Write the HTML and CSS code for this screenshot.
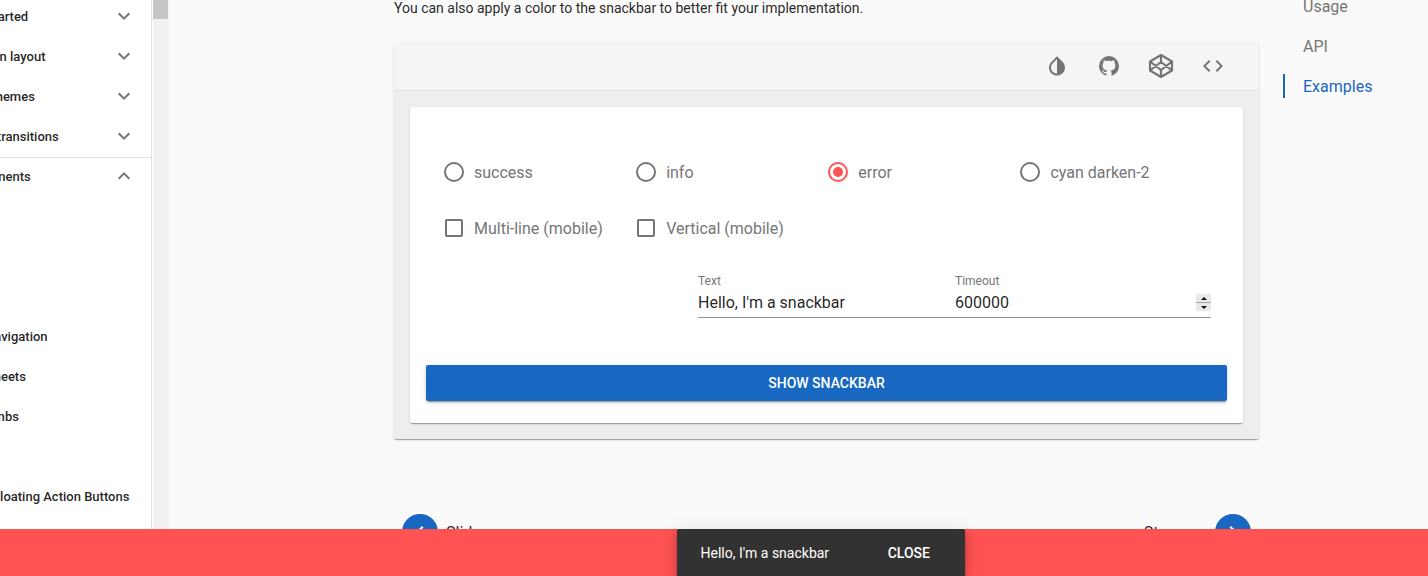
FILE: index.html
```html
<!DOCTYPE html>
<html lang="en">
<head>
<meta charset="utf-8">
<title>Snackbars</title>
<link rel="stylesheet" href="styles.css">
</head>
<body>
<div class="app">
  <nav class="sidebar">
    <ul class="nav-list">
      <li class="nav-row"><span class="nav-label">Getting started</span><svg class="chev" viewBox="0 0 24 24"><path d="M7.41,8.58L12,13.17L16.59,8.58L18,10L12,16L6,10L7.41,8.58Z"/></svg></li>
      <li class="nav-row"><span class="nav-label">Application layout</span><svg class="chev" viewBox="0 0 24 24"><path d="M7.41,8.58L12,13.17L16.59,8.58L18,10L12,16L6,10L7.41,8.58Z"/></svg></li>
      <li class="nav-row"><span class="nav-label">Styles &amp; themes</span><svg class="chev" viewBox="0 0 24 24"><path d="M7.41,8.58L12,13.17L16.59,8.58L18,10L12,16L6,10L7.41,8.58Z"/></svg></li>
      <li class="nav-row"><span class="nav-label">Motion &amp; transitions</span><svg class="chev" viewBox="0 0 24 24"><path d="M7.41,8.58L12,13.17L16.59,8.58L18,10L12,16L6,10L7.41,8.58Z"/></svg></li>
      <li class="nav-row nav-row-divided"><span class="nav-label">UI Components</span><svg class="chev" viewBox="0 0 24 24"><path d="M7.41,15.41L12,10.83L16.59,15.41L18,14L12,8L6,14L7.41,15.41Z"/></svg></li>
      <li class="nav-row"><span class="nav-label">Alerts</span></li>
      <li class="nav-row"><span class="nav-label">Avatars</span></li>
      <li class="nav-row"><span class="nav-label">Badges</span></li>
      <li class="nav-row"><span class="nav-label">Bottom navigation</span></li>
      <li class="nav-row"><span class="nav-label">Bottom sheets</span></li>
      <li class="nav-row"><span class="nav-label">Breadcrumbs</span></li>
      <li class="nav-row"><span class="nav-label">Buttons</span></li>
      <li class="nav-row"><span class="nav-label">Buttons: Floating Action Buttons</span></li>
      <li class="nav-row"><span class="nav-label">Cards</span></li>
    </ul>
  </nav>
  <div class="scrollbar"><div class="scroll-thumb"></div></div>
  <main class="main">
    <p class="intro">You can also apply a color to the snackbar to better fit your implementation.</p>
    <section class="example">
      <header class="toolbar">
        <svg class="tool-icon" viewBox="0 0 24 24"><path d="M12,19.58V19.58C10.4,19.58 8.89,18.96 7.76,17.83C6.62,16.69 6,15.19 6,13.58C6,12 6.62,10.47 7.76,9.34L12,5.1M17.66,7.93L12,2.27V2.27L6.34,7.93C3.22,11.05 3.22,16.12 6.34,19.24C7.9,20.8 9.95,21.58 12,21.58C14.05,21.58 16.1,20.8 17.66,19.24C20.78,16.12 20.78,11.05 17.66,7.93Z"/></svg>
        <svg class="tool-icon" viewBox="0 0 24 24"><path d="M12,2A10,10 0 0,0 2,12C2,16.42 4.87,20.17 8.84,21.5C9.34,21.58 9.5,21.27 9.5,21C9.5,20.77 9.5,20.14 9.5,19.31C6.73,19.91 6.14,17.97 6.14,17.97C5.68,16.81 5.03,16.5 5.03,16.5C4.12,15.88 5.1,15.9 5.1,15.9C6.1,15.97 6.63,16.93 6.63,16.93C7.5,18.45 8.97,18 9.54,17.76C9.63,17.11 9.89,16.67 10.17,16.42C7.95,16.17 5.62,15.31 5.62,11.5C5.62,10.39 6,9.5 6.65,8.79C6.55,8.54 6.2,7.5 6.75,6.15C6.75,6.15 7.59,5.88 9.5,7.17C10.29,6.95 11.15,6.84 12,6.84C12.85,6.84 13.71,6.95 14.5,7.17C16.41,5.88 17.25,6.15 17.25,6.15C17.8,7.5 17.45,8.54 17.35,8.79C18,9.5 18.38,10.39 18.38,11.5C18.38,15.32 16.04,16.16 13.81,16.41C14.17,16.72 14.5,17.33 14.5,18.26C14.5,19.6 14.5,20.68 14.5,21C14.5,21.27 14.66,21.59 15.17,21.5C19.14,20.16 22,16.42 22,12A10,10 0 0,0 12,2Z"/></svg>
        <svg class="tool-icon tool-icon-stroke" viewBox="0 0 24 24"><path d="M12,1L23,7.5V16.5L12,23L1,16.5V7.5Z M12,1V8 M12,16V23 M1,7.5L12,16L23,7.5 M1,16.5L12,8L23,16.5"/></svg>
        <svg class="tool-icon" viewBox="0 0 24 24"><path d="M14.6,16.6L19.2,12L14.6,7.4L16,6L22,12L16,18L14.6,16.6M9.4,16.6L4.8,12L9.4,7.4L8,6L2,12L8,18L9.4,16.6Z"/></svg>
      </header>
      <div class="example-body">
        <form class="panel">
          <div class="option-grid">
            <label class="option"><svg class="ctl" viewBox="0 0 24 24"><circle cx="12" cy="12" r="9" class="ctl-ring"/></svg>success</label>
            <label class="option"><svg class="ctl" viewBox="0 0 24 24"><circle cx="12" cy="12" r="9" class="ctl-ring"/></svg>info</label>
            <label class="option"><svg class="ctl ctl-on" viewBox="0 0 24 24"><circle cx="12" cy="12" r="9" class="ctl-ring"/><circle cx="12" cy="12" r="5"/></svg>error</label>
            <label class="option"><svg class="ctl" viewBox="0 0 24 24"><circle cx="12" cy="12" r="9" class="ctl-ring"/></svg>cyan darken-2</label>
            <label class="option"><svg class="ctl" viewBox="0 0 24 24"><path d="M19,3H5C3.89,3 3,3.89 3,5V19A2,2 0 0,0 5,21H19A2,2 0 0,0 21,19V5C21,3.89 20.1,3 19,3M19,5V19H5V5H19Z"/></svg>Multi-line (mobile)</label>
            <label class="option"><svg class="ctl" viewBox="0 0 24 24"><path d="M19,3H5C3.89,3 3,3.89 3,5V19A2,2 0 0,0 5,21H19A2,2 0 0,0 21,19V5C21,3.89 20.1,3 19,3M19,5V19H5V5H19Z"/></svg>Vertical (mobile)</label>
          </div>
          <div class="fields">
            <label class="field field-text"><span class="field-label">Text</span><input class="field-input" type="text" value="Hello, I'm a snackbar"></label>
            <label class="field field-num"><span class="field-label">Timeout</span><input class="field-input" type="number" value="600000"><span class="spin" aria-hidden="true"><span class="spin-btn"><span class="spin-up"></span></span><span class="spin-btn"><span class="spin-down"></span></span></span></label>
          </div>
          <button class="show-btn" type="button">Show Snackbar</button>
        </form>
      </div>
    </section>
    <div class="pager">
      <a class="pager-link"><span class="pager-dot"><svg viewBox="0 0 24 24"><path d="M15.41,16.58L10.83,12L15.41,7.41L14,6L8,12L14,18L15.41,16.58Z"/></svg></span>Sliders</a>
      <a class="pager-link">Steppers<span class="pager-dot"><svg viewBox="0 0 24 24"><path d="M8.59,16.58L13.17,12L8.59,7.41L10,6L16,12L10,18L8.59,16.58Z"/></svg></span></a>
    </div>
  </main>
  <aside class="toc">
    <a class="toc-item">Usage</a>
    <a class="toc-item">API</a>
    <a class="toc-item toc-active">Examples</a>
  </aside>
</div>
<div class="snack-bar">
  <div class="snack">
    <span class="snack-text">Hello, I'm a snackbar</span>
    <button class="snack-close" type="button">Close</button>
  </div>
</div>
</body>
</html>
```

FILE: styles.css
```css
* { box-sizing: border-box; }
html, body { margin: 0; height: 100%; overflow: hidden; }
body {
  font-family: Roboto, "Liberation Sans", sans-serif;
  background: #fafafa;
  color: rgba(0, 0, 0, .87);
}
.app { display: flex; height: 576px; overflow: hidden; }

/* sidebar */
.sidebar {
  flex: 0 0 152px;
  background: #fff;
  border-right: 1px solid #e0e0e0;
  overflow: hidden;
}
.nav-list { list-style: none; margin: -4px 0 0; padding: 0; }
.nav-row {
  display: flex;
  align-items: center;
  justify-content: space-between;
  height: 40px;
  margin-left: -59px;
  padding-right: 15px;
  font-size: 13px;
  font-weight: 500;
  white-space: nowrap;
}
.nav-row-divided { position: relative; }
.nav-row-divided::before {
  content: "";
  position: absolute;
  left: 0;
  right: 0;
  top: 1px;
  border-top: 1px solid #e0e0e0;
}
.chev { width: 24px; height: 24px; fill: #757575; flex: none; }

/* page scrollbar */
.scrollbar { flex: 0 0 17px; background: #f1f1f1; padding: 0 1px; border-left: 1px solid #fff; }
.scroll-thumb { height: 19px; margin-left: -1px; margin-right: 0; background: #c6c6c6; }

/* main column */
.main { flex: 0 0 1090px; padding: 0 0 0 225px; }
.intro { margin: -2px 0 0; font-size: 14px; line-height: 20px; width: 865px; }
.example {
  width: 865px;
  margin-top: 24px;
  border-radius: 2px;
  box-shadow: 0 2px 1px -1px rgba(0,0,0,.2), 0 1px 1px 0 rgba(0,0,0,.14), 0 1px 3px 0 rgba(0,0,0,.12);
}
.toolbar {
  display: flex;
  justify-content: flex-end;
  align-items: center;
  gap: 28px;
  height: 49px;
  padding-right: 34px;
  background: #f5f5f5;
  border-bottom: 1px solid #e0e0e0;
  border-radius: 2px 2px 0 0;
}
.tool-icon { width: 24px; height: 24px; fill: #757575; flex: none; overflow: visible; }
.tool-icon-stroke { fill: none; stroke: #757575; stroke-width: 2.2; stroke-linejoin: round; }
.example-body { background: #eee; padding: 16px; }
.panel {
  background: #fff;
  border-radius: 2px;
  padding: 53px 16px 22px;
  box-shadow: 0 2px 1px -1px rgba(0,0,0,.2), 0 1px 1px 0 rgba(0,0,0,.14), 0 1px 3px 0 rgba(0,0,0,.12);
}
.option-grid {
  display: grid;
  grid-template-columns: repeat(4, 192.15px);
  row-gap: 32px;
  margin-left: 16px;
}
.option {
  display: flex;
  align-items: center;
  gap: 8px;
  height: 24px;
  font-size: 16px;
  color: #757575;
  white-space: nowrap;
}
.ctl { width: 24px; height: 24px; fill: #757575; flex: none; }
.ctl-ring { fill: none; stroke: #757575; stroke-width: 2; }
.ctl-on { fill: #ff5252; }
.ctl-on .ctl-ring { stroke: #ff5252; }

.fields { display: flex; margin: 34px 0 0 272px; }
.field { display: flex; flex-direction: column; position: relative; }
.field-text { width: 257px; }
.field-num { width: 256px; }
.field-label { font-size: 12px; line-height: 14px; color: #757575; }
.field-input {
  height: 30px;
  padding: 6px 0;
  border: 0;
  border-bottom: 1px solid #949494;
  outline: 0;
  background: transparent;
  font: 16px/17px Roboto, "Liberation Sans", sans-serif;
  color: rgba(0, 0, 0, .87);
}
.field-input::-webkit-inner-spin-button { display: none; }
.spin {
  position: absolute;
  right: 0;
  top: 20px;
  display: flex;
  flex-direction: column;
  width: 15px;
  height: 17px;
  gap: 1px;
  background: #a8a8a8;
}
.spin-btn {
  flex: 1;
  display: flex;
  align-items: center;
  justify-content: center;
  background: #e9e9e9;
}
.spin-up, .spin-down {
  width: 0;
  height: 0;
  border-left: 3.5px solid transparent;
  border-right: 3.5px solid transparent;
}
.spin-up { border-bottom: 3px solid #111; }
.spin-down { border-top: 3px solid #111; }

.show-btn {
  display: block;
  width: 100%;
  height: 36px;
  margin-top: 47px;
  border: 0;
  border-radius: 2px;
  background: #1867c0;
  color: #fff;
  font: 500 14px Roboto, "Liberation Sans", sans-serif;
  text-transform: uppercase;
  box-shadow: 0 3px 1px -2px rgba(0,0,0,.2), 0 2px 2px 0 rgba(0,0,0,.14), 0 1px 5px 0 rgba(0,0,0,.12);
}

/* prev/next */
.pager {
  display: flex;
  justify-content: space-between;
  width: 865px;
  margin-top: 75px;
  padding: 0 8px;
}
.pager-link { display: flex; align-items: center; gap: 8px; font-size: 16px; }
.pager-dot {
  display: flex;
  align-items: center;
  justify-content: center;
  width: 36px;
  height: 36px;
  border-radius: 50%;
  background: #1867c0;
}
.pager-dot svg { width: 24px; height: 24px; fill: #fff; }

/* toc */
.toc { display: flex; flex-direction: column; margin: -14px 0 0 24px; }
.toc-item {
  display: flex;
  align-items: center;
  height: 40px;
  padding-left: 20px;
  font-size: 16px;
  color: #757575;
}
.toc-active { position: relative; color: #1867c0; }
.toc-active::before {
  content: "";
  position: absolute;
  left: 0;
  top: 8px;
  bottom: 8px;
  width: 2px;
  background: #1867c0;
}

/* snackbar */
.snack-bar {
  position: fixed;
  left: 0;
  right: 0;
  bottom: 0;
  height: 47px;
  padding-left: 214px;
  display: flex;
  justify-content: center;
  background: #ff5252;
}
.snack {
  display: flex;
  align-items: center;
  justify-content: space-between;
  width: 288px;
  padding: 0 35px 0 23.5px;
  background: #323232;
  color: #fff;
  border-radius: 2px 2px 0 0;
  font-size: 14px;
  box-shadow: 0 3px 5px -1px rgba(0,0,0,.2), 0 6px 10px 0 rgba(0,0,0,.14), 0 1px 18px 0 rgba(0,0,0,.12);
}
.snack-close {
  padding: 0;
  border: 0;
  background: none;
  color: #fff;
  font: 500 14px Roboto, "Liberation Sans", sans-serif;
  text-transform: uppercase;
}
```
